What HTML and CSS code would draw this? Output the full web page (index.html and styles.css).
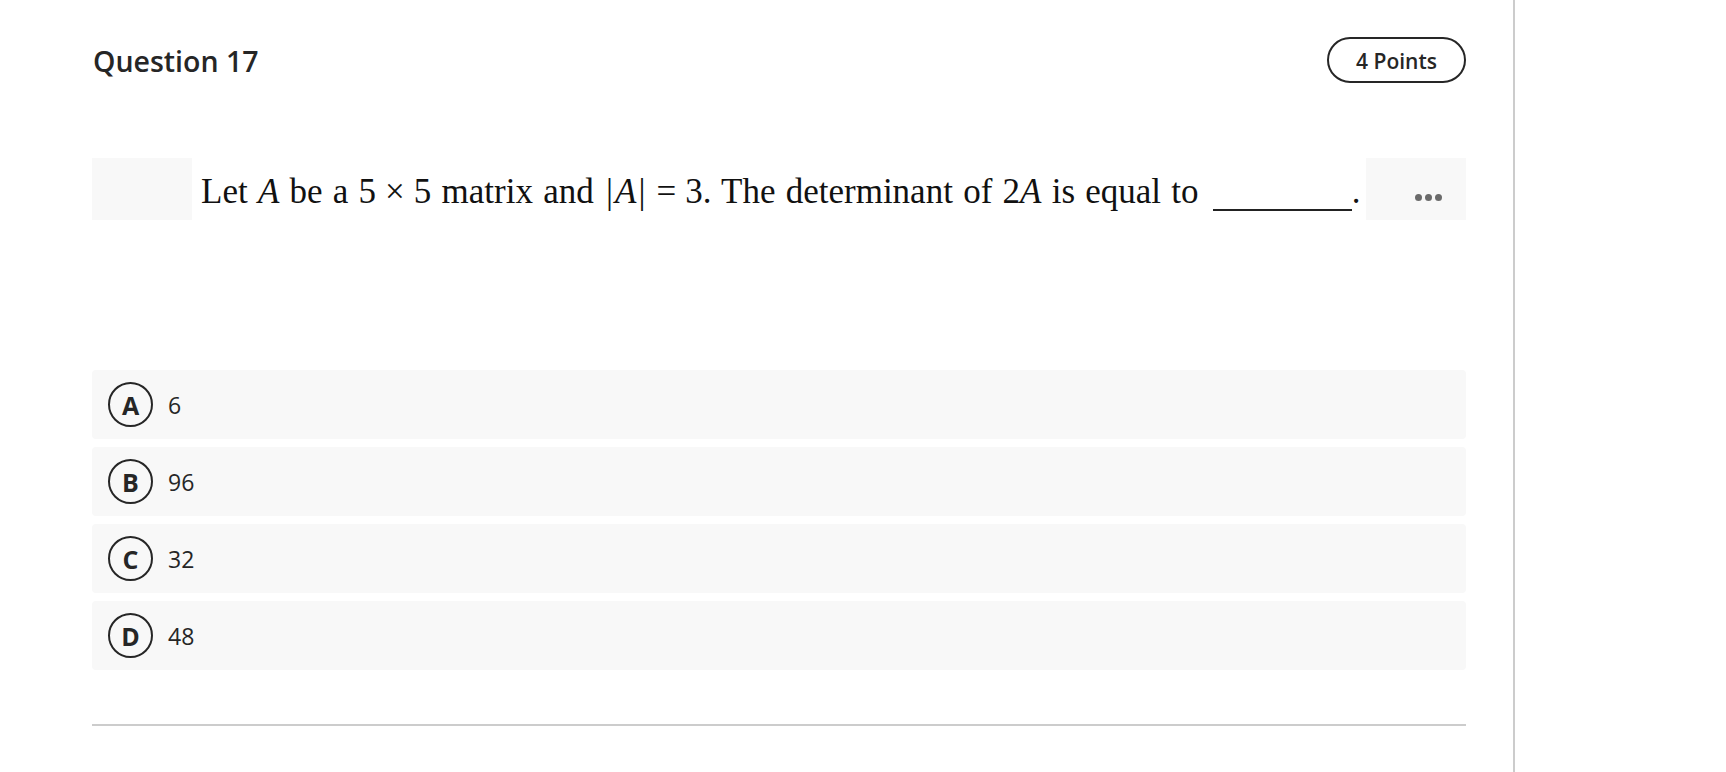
FILE: index.html
```html
<!DOCTYPE html>
<html lang="en">
<head>
<meta charset="utf-8">
<title>Question 17</title>
<link rel="stylesheet" href="styles.css">
</head>
<body>
<div class="page">
  <main class="main">
    <header class="q-header">
      <h1 class="q-title">Question 17</h1>
      <span class="points">4 Points</span>
    </header>

    <section class="prompt">
      <div class="prompt-pad"></div>
      <div class="prompt-body">
        <span class="math">Let <i>A</i> be a 5<span class="op">×</span>5 matrix and <span class="bar">|</span><i>A</i><span class="bar">|</span><span class="op">=</span>3. The determinant of 2<i>A</i> is equal to <span class="blank"></span>.</span>
      </div>
      <div class="prompt-more">
        <span class="dots"><span class="dot"></span><span class="dot"></span><span class="dot"></span></span>
      </div>
    </section>

    <ul class="options">
      <li class="option"><span class="letter">A</span><span class="answer">6</span></li>
      <li class="option"><span class="letter">B</span><span class="answer">96</span></li>
      <li class="option"><span class="letter">C</span><span class="answer">32</span></li>
      <li class="option"><span class="letter">D</span><span class="answer">48</span></li>
    </ul>

    <hr class="rule">
  </main>
  <aside class="side"></aside>
</div>
</body>
</html>
```

FILE: styles.css
```css
* { box-sizing: border-box; }

html, body {
  margin: 0;
  padding: 0;
  background: #ffffff;
}

body {
  font-family: "Open Sans", "Noto Sans", sans-serif;
  color: #262626;
}

.page {
  display: flex;
  min-height: 100vh;
}

.main {
  width: 1515px;
  padding: 0 47px 0 92px;
  border-right: 2px solid #cccccc;
  min-height: 100vh;
  flex: none;
}

.side {
  flex: 1;
}

.q-header {
  display: flex;
  justify-content: space-between;
  align-items: center;
  padding-top: 37px;
}

.q-title {
  margin: 2px 0 0 1px;
  font-size: 28.5px;
  font-weight: 600;
  line-height: 38px;
  color: #262626;
}

.points {
  display: flex;
  align-items: center;
  justify-content: center;
  width: 139px;
  height: 46px;
  border: 2px solid #262626;
  border-radius: 23px;
  font-size: 21px;
  font-weight: 600;
  color: #262626;
  padding-top: 1px;
}

.prompt {
  display: flex;
  margin-top: 75px;
  height: 62px;
  background: #f8f8f8;
}

.prompt-pad {
  width: 100px;
  flex: none;
}

.prompt-body {
  flex: 1;
  background: #ffffff;
  padding: 7px 0 0 9px;
}

.math {
  font-family: "Liberation Serif", "Times New Roman", serif;
  font-size: 35px;
  line-height: 54px;
  color: #111111;
  white-space: nowrap;
  word-spacing: 1.5px;
}

.math i {
  font-style: italic;
}

.op {
  margin: 0 9px;
}

.bar {
  margin: 0 2px;
}

.blank {
  display: inline-block;
  width: 139px;
  height: 2px;
  background: #222222;
  vertical-align: baseline;
  margin-left: 4px;
  position: relative;
  top: 8px;
}

.prompt-more {
  width: 100px;
  flex: none;
  display: flex;
  align-items: center;
  padding: 16px 0 0 49px;
}

.dots {
  display: flex;
  gap: 3px;
}

.dot {
  width: 7px;
  height: 7px;
  border-radius: 50%;
  background: #6b6b6b;
}

.options {
  list-style: none;
  margin: 150px 0 0;
  padding: 0;
  display: flex;
  flex-direction: column;
  gap: 8px;
}

.option {
  display: flex;
  align-items: center;
  height: 69px;
  padding-left: 16px;
  background: #f8f8f8;
  border-radius: 4px;
}

.letter {
  width: 45px;
  height: 45px;
  border: 2px solid #262626;
  border-radius: 50%;
  display: flex;
  align-items: center;
  justify-content: center;
  font-size: 25px;
  font-weight: 700;
  color: #262626;
  flex: none;
}

.answer {
  margin-left: 15px;
  font-size: 23px;
  color: #262626;
}

.rule {
  margin: 54px 0 0;
  border: 0;
  height: 2px;
  background: #cccccc;
}
```
